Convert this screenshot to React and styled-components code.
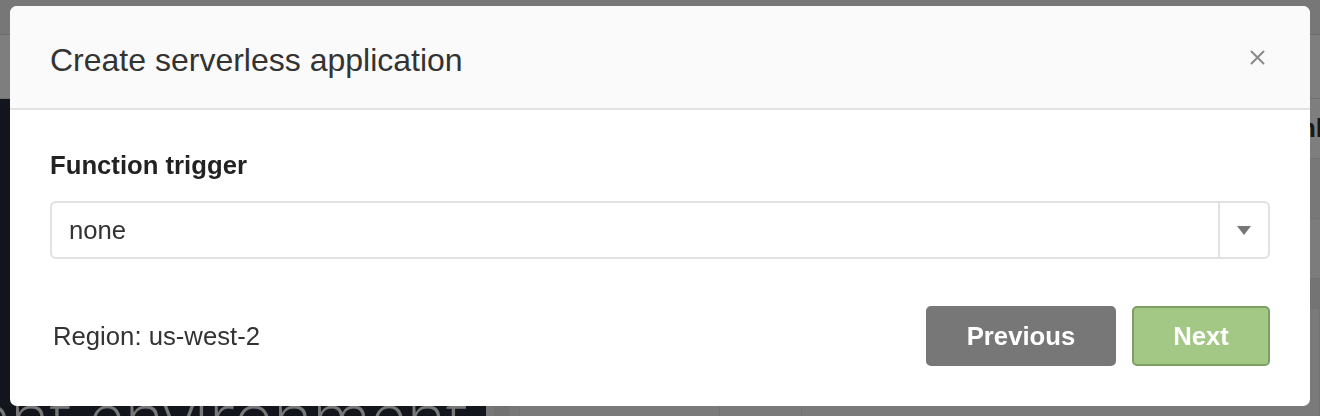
import React from 'react'
import styled, { createGlobalStyle } from 'styled-components'

const GlobalStyle = createGlobalStyle`
  html, body {
    margin: 0;
    padding: 0;
    background: #f4f4f4;
  }
  body {
    font-family: "Liberation Sans", Arial, Helvetica, sans-serif;
  }
  * {
    box-sizing: border-box;
  }
`

// page sitting under the dialog
const Page = styled.div`
  width: 1320px;
  height: 416px;
  overflow: hidden;
  display: flex;
  flex-direction: column;
  background: #f4f4f4;
`

const TopBar = styled.div`
  height: 35px;
  flex: none;
  background: #eeeeee;
  border-bottom: 1px solid #dcdcdc;
`

const SubBar = styled.div`
  height: 64px;
  flex: none;
  background: #fdfdfd;
  border-bottom: 1px solid #dedede;
`

const Main = styled.div`
  flex: 1;
  display: flex;
  min-height: 0;
`

const Sidebar = styled.div`
  width: 486px;
  flex: none;
  background: #242c38;
  overflow: hidden;
  padding-top: 283px;
`

const SidebarTitle = styled.div`
  margin-left: -26px;
  font-family: "Open Sans", "Liberation Sans", sans-serif;
  font-weight: 300;
  font-size: 66px;
  line-height: 66px;
  color: #eeeeee;
  white-space: nowrap;
`

const Content = styled.div`
  flex: 1;
  display: flex;
  flex-direction: column;
  overflow: hidden;
`

const ContentRow = styled.div`
  height: ${p => p.$h}px;
  flex: none;
  background: ${p => p.$bg};
  border-bottom: 1px solid #e4e4e4;
  display: flex;
  align-items: center;
`

const HeadText = styled.span`
  padding-left: 772px;
  font-size: 26px;
  font-weight: 700;
  color: #333;
  white-space: nowrap;
`

const Columns = styled.div`
  flex: 1;
  display: grid;
  grid-template-columns: 9px 15px 10px 200px 82px 1fr;
`

const Cell = styled.div`
  background: ${p => p.$bg || '#f4f4f4'};
  border-right: 1px solid #e6e6e6;
`

// dialog
const Backdrop = styled.div`
  position: fixed;
  inset: 0;
  background: rgba(0, 0, 0, 0.5);
`

const Modal = styled.div`
  position: fixed;
  top: 6px;
  left: 10px;
  width: 1300px;
  height: 400px;
  background: #ffffff;
  border-radius: 7px;
  overflow: hidden;
  display: flex;
  flex-direction: column;
`

const Header = styled.div`
  height: 104px;
  flex: none;
  display: flex;
  align-items: center;
  justify-content: space-between;
  padding: 0 45px 2px 40px;
  background: #fafafa;
  border-bottom: 2px solid #e2e2e2;
`

const Title = styled.h4`
  margin: 8px 0 0;
  font-size: 32px;
  font-weight: 400;
  color: #333333;
`

const CloseButton = styled.button`
  width: 15px;
  height: 15px;
  margin-top: 2px;
  padding: 0;
  border: none;
  background: none;
  display: flex;
  cursor: pointer;
`

const Body = styled.div`
  flex: 1;
  padding: 40px 40px 0;
  display: flex;
  flex-direction: column;
`

const Label = styled.label`
  margin: 0 0 21px;
  font-size: 25.7px;
  line-height: 30px;
  font-weight: 700;
  color: #222222;
`

const Select = styled.div`
  height: 58px;
  display: flex;
  border: 2px solid #e1e1e1;
  border-radius: 6px;
`

const SelectValue = styled.div`
  flex: 1;
  display: flex;
  align-items: center;
  padding-left: 17px;
  font-size: 25.7px;
  color: #333333;
`

const SelectArrow = styled.div`
  width: 50px;
  border-left: 2px solid #e1e1e1;
  display: flex;
  align-items: center;
  justify-content: center;
  &::after {
    content: '';
    border-left: 7px solid transparent;
    border-right: 7px solid transparent;
    border-top: 9px solid #777777;
  }
`

const Footer = styled.div`
  margin-top: 47px;
  display: flex;
  align-items: center;
  justify-content: space-between;
`

const Region = styled.span`
  padding-left: 3px;
  font-size: 25.7px;
  color: #333333;
`

const Buttons = styled.div`
  display: flex;
  gap: 16px;
`

const Button = styled.button`
  width: ${p => p.$w}px;
  height: 60px;
  border-radius: 5px;
  border: 2px solid ${p => p.$border};
  background: ${p => p.$bg};
  color: #ffffff;
  font-family: inherit;
  font-size: 25.7px;
  font-weight: 700;
  padding: 0;
  cursor: pointer;
`

export default function App() {
  return (
    <>
      <GlobalStyle />
      <Page>
        <TopBar />
        <SubBar />
        <Main>
          <Sidebar>
            <SidebarTitle>ent environment</SidebarTitle>
          </Sidebar>
          <Content>
            <ContentRow $h={60} $bg="#fdfdfd">
              <HeadText>Number</HeadText>
            </ContentRow>
            <ContentRow $h={60} $bg="#f0f0f0" />
            <ContentRow $h={60} $bg="#f8f8f8" />
            <ContentRow $h={30} $bg="#e8e8e8" />
            <Columns>
              <Cell $bg="#eeeeee" />
              <Cell $bg="#e4e4e4" />
              <Cell $bg="#eeeeee" />
              <Cell />
              <Cell />
              <Cell />
            </Columns>
          </Content>
        </Main>
      </Page>

      <Backdrop />
      <Modal>
        <Header>
          <Title>Create serverless application</Title>
          <CloseButton aria-label="Close">
            <svg width="15" height="15" viewBox="0 0 15 15">
              <path d="M1.5 1.5 L13.5 13.5 M13.5 1.5 L1.5 13.5" stroke="#8a8a8a" strokeWidth="2" strokeLinecap="round" />
            </svg>
          </CloseButton>
        </Header>
        <Body>
          <Label>Function trigger</Label>
          <Select>
            <SelectValue>none</SelectValue>
            <SelectArrow />
          </Select>
          <Footer>
            <Region>Region: us-west-2</Region>
            <Buttons>
              <Button $w={190} $bg="#777777" $border="#777777">Previous</Button>
              <Button $w={138} $bg="#a3c784" $border="#7d9f63">Next</Button>
            </Buttons>
          </Footer>
        </Body>
      </Modal>
    </>
  )
}
